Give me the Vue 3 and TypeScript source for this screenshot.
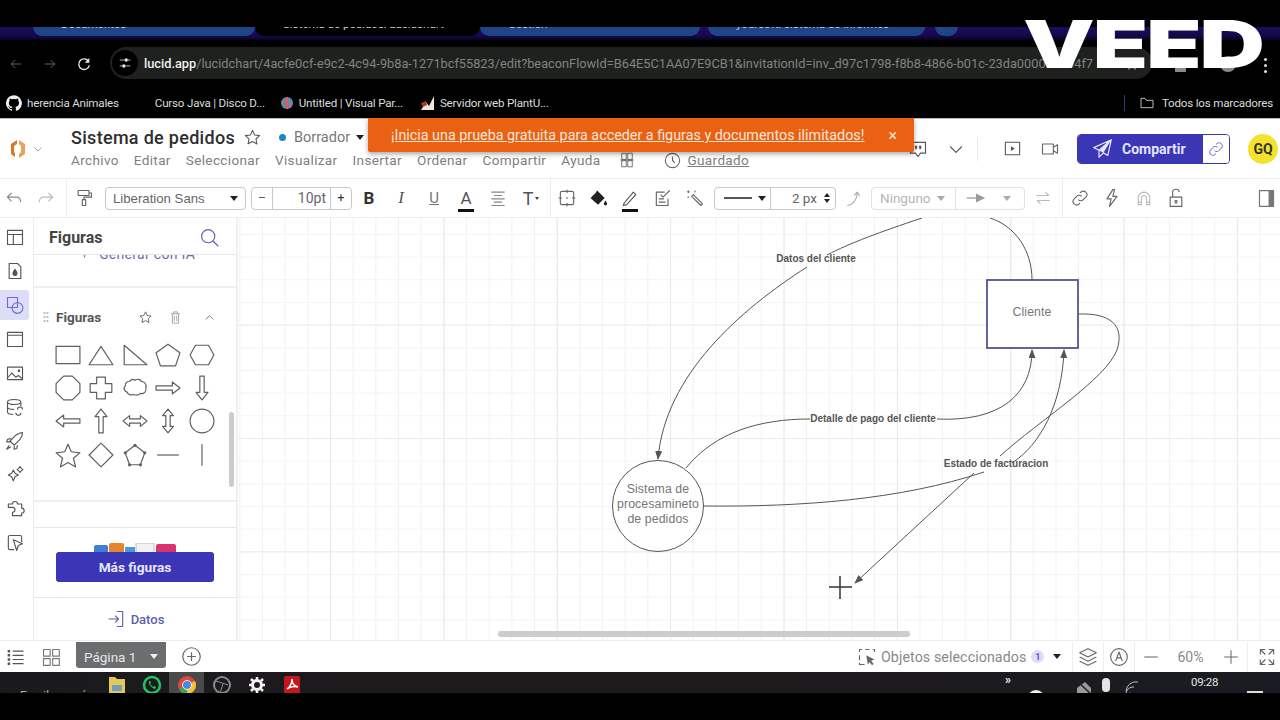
<template>
  <div class="screen">
    <div class="letterbox"></div>

    <div class="tabstrip">
      <div v-for="t in tabs" :key="t.text" class="tab" :class="{ current: t.current }" :style="{ width: t.w + 'px', marginLeft: t.ml + 'px' }">
        <span class="tab-text">{{ t.text }}</span>
      </div>
    </div>

    <div class="chromebar">
      <span class="nav-btn"><Ico n="back" :s="16" c="#6b6b6b" /></span>
      <span class="nav-btn"><Ico n="forward" :s="16" c="#6b6b6b" /></span>
      <span class="nav-btn"><Ico n="reload" :s="16" c="#e8e8e8" :w="2" /></span>
      <div class="omnibox">
        <span class="site-icon"><Ico n="tune" :s="14" c="#e6e6e6" /></span>
        <span class="url"><b>lucid.app</b>/lucidchart/4acfe0cf-e9c2-4c94-9b8a-1271bcf55823/edit?beaconFlowId=B64E5C1AA07E9CB1&amp;invitationId=inv_d97c1798-f8b8-4866-b01c-23da000000004f7</span>
      </div>
      <span class="peek-star"><Ico n="star" :s="16" c="#8a8a8a" /></span>
      <span class="peek-tablet"></span>
      <span class="peek-profile"></span>
      <span class="kebab"></span>
    </div>

    <div class="bookmarks">
      <span class="bm gh"><Ico n="github" :s="16" c="#f0f0f0" />herencia Animales</span>
      <span class="bm java">Curso Java | Disco D...</span>
      <span class="bm vp">
        <svg width="14" height="14" viewBox="0 0 14 14"><circle cx="7" cy="7" r="6" fill="#5b8fa8" /><path d="M7 1v12M2 5l10 5" stroke="#d65b6b" stroke-width="2" /></svg>
        Untitled | Visual Par...
      </span>
      <span class="bm uml">
        <svg width="15" height="16" viewBox="0 0 15 16"><path d="M1 15 6 7l3 4 5-10v14z" fill="#f0e6dc" /><path d="M1 8l5-2 1 4-4 2z" fill="#b5342e" /></svg>
        Servidor web PlantU...
      </span>
      <span class="bm-divider"></span>
      <span class="bm all"><Ico n="folder" :s="16" c="#cfcfcf" />Todos los marcadores</span>
    </div>

    <div class="app">
      <header class="header">
        <div class="brand">
          <svg width="20" height="20" viewBox="0 0 20 20">
            <path d="M9 1 3 5v10l4 3v-4L6 13V7l3-2z" fill="#d9762b" />
            <path d="M11 1l6 4v10l-6 4v-4l2-2V7l-2-2z" fill="#e9a35d" />
          </svg>
          <Ico n="down" :s="12" c="#777" />
        </div>
        <div class="doc">
          <div class="title-row">
            <span class="doc-title">Sistema de pedidos</span>
            <Ico n="star" :s="19" c="#555" />
            <span class="status-dot"></span>
            <span class="status">Borrador</span>
            <span class="caret"></span>
          </div>
          <div class="menu-row">
            <nav class="menu">
              <span v-for="m in menu" :key="m">{{ m }}</span>
            </nav>
            <span class="org"><Ico n="org" :s="18" c="#777" /></span>
            <span class="clock"><Ico n="clock" :s="19" c="#666" /></span>
            <span class="saved">Guardado</span>
          </div>
        </div>
        <div class="actions">
          <span class="act"><Ico n="comment" :s="20" c="#555" /></span>
          <span class="act chev"><Ico n="down" :s="20" c="#555" /></span>
          <span class="act-divider"></span>
          <span class="act play"><Ico n="play" :s="19" c="#555" /></span>
          <span class="act video"><Ico n="video" :s="20" c="#666" /></span>
          <div class="share">
            <button class="share-main"><Ico n="send" :s="21" c="#e4e4fa" />Compartir</button>
            <span class="share-link"><Ico n="link" :s="18" c="#7d80c4" /></span>
          </div>
          <span class="avatar">GQ</span>
        </div>
      </header>

      <div class="toolbar">
        <span class="tb first"><Ico n="undo" :s="20" c="#888" /></span>
        <span class="tb"><Ico n="redo" :s="20" c="#bbb" /></span>
        <span class="tb-divider d1"></span>
        <span class="tb"><Ico n="roller" :s="20" c="#666" /></span>
        <div class="field font-field"><span>Liberation Sans</span><i class="caret"></i></div>
        <div class="field size-field">
          <span class="step left">–</span>
          <span class="size">10pt</span>
          <span class="step right">+</span>
        </div>
        <span class="tb glyph bold">B</span>
        <span class="tb glyph ital">I</span>
        <span class="tb glyph under">U</span>
        <span class="tb glyph mark">A</span>
        <span class="tb"><Ico n="align" :s="20" c="#888" /></span>
        <span class="tb glyph tee">T<i class="tiny"></i></span>
        <span class="tb-divider d2"></span>
        <span class="tb tight"><Ico n="frame" :s="20" c="#666" /></span>
        <span class="tb"><Ico n="bucket" :s="20" c="#222" /></span>
        <span class="tb mark-icon"><Ico n="pen" :s="20" c="#555" /></span>
        <span class="tb wide"><Ico n="notes" :s="20" c="#666" /></span>
        <span class="tb"><Ico n="wand" :s="20" c="#666" /></span>
        <div class="field line-field">
          <span class="line-part"><i class="stroke"></i><i class="caret"></i></span>
          <span class="px-part">2 px<i class="updown"></i></span>
        </div>
        <span class="tb curve-cell"><Ico n="curve" :s="20" c="#aaa" /></span>
        <div class="field end-field">
          <span class="end-part">Ninguno<i class="caret soft"></i></span>
          <span class="end-part second"><Ico n="lineArrow" :s="22" c="#9a9a9a" /><i class="caret soft"></i></span>
        </div>
        <span class="tb swap-cell"><Ico n="swap" :s="20" c="#bbb" /></span>
        <span class="tb-divider d3"></span>
        <span class="tb"><Ico n="link" :s="20" c="#666" /></span>
        <span class="tb"><Ico n="bolt" :s="20" c="#666" /></span>
        <span class="tb"><Ico n="magnet" :s="20" c="#bbb" /></span>
        <span class="tb"><Ico n="lock" :s="20" c="#666" /></span>
        <span class="tb panel-toggle"><Ico n="panel" :s="21" c="#777" /></span>
      </div>

      <div class="workspace">
        <aside class="rail">
          <span v-for="r in railIcons" :key="r" class="rail-item" :class="{ active: r === 'shapes' }">
            <Ico :n="r" :s="20" :c="r === 'shapes' ? '#6a6ec9' : '#555'" />
          </span>
        </aside>

        <section class="panel">
          <div class="panel-head">
            <span>Figuras</span>
            <Ico n="search" :s="21" c="#5c60ad" />
          </div>
          <div class="panel-scroll">
            <div class="ai-row"><Ico n="sparkle" :s="13" c="#6a6ea8" /><span>Generar con IA</span></div>
            <div class="group">
              <div class="group-head">
                <span class="grip"></span>
                <span class="group-name">Figuras</span>
                <span class="gi star-i"><Ico n="star" :s="15" c="#555" /></span>
                <span class="gi trash-i"><Ico n="trash" :s="15" c="#999" /></span>
                <span class="gi up-i"><Ico n="up" :s="15" c="#666" /></span>
              </div>
              <div class="shape-grid">
                <span v-for="s in shapes" :key="s" class="shape"><Ico :n="s" :s="26" c="#5f5f5f" :w="1.1" /></span>
              </div>
            </div>
            <div class="group second">
              <div class="group-head">
                <span class="grip"></span>
                <span class="group-name">Mis figur...</span>
                <span class="gi star-i"><Ico n="star" :s="15" c="#555" /></span>
                <span class="gi trash-i"><Ico n="trash" :s="15" c="#999" /></span>
                <span class="gi up-i"><Ico n="up" :s="15" c="#666" /></span>
              </div>
            </div>
            <div class="scroll-thumb"></div>
          </div>
          <div class="panel-foot">
            <svg class="peek" width="90" height="9" viewBox="0 0 90 9">
              <rect x="1" y="2" width="14" height="10" rx="2" fill="#3f7fd8" />
              <rect x="16" y="0" width="15" height="12" rx="2" fill="#e5852e" />
              <rect x="32" y="4" width="10" height="8" fill="#4a9bd8" />
              <rect x="43" y="0" width="18" height="12" fill="#f2f2f2" stroke="#aaa" stroke-width=".7" />
              <rect x="63" y="1" width="20" height="12" rx="2" fill="#d8336e" />
            </svg>
            <button class="more">Más figuras</button>
          </div>
          <div class="panel-data"><Ico n="import" :s="20" c="#5c60ad" /><span>Datos</span></div>
        </section>

        <main class="canvas">
          <svg class="diagram" viewBox="238 218 1042 422" width="1042" height="422">
            <defs>
              <marker id="head" markerWidth="10" markerHeight="10" refX="8" refY="3.5" orient="auto" markerUnits="userSpaceOnUse">
                <path d="M0 0 9 3.5 0 7z" fill="#555" />
              </marker>
            </defs>
            <g class="wire">
              <path d="M1032 280C1032 250 1015 226 990 218" />
              <path d="M922 218C880 232 850 243 827 255" />
              <path d="M807 267C740 310 665 375 658 459" marker-end="url(#head)" />
              <path d="M686 468C715 432 760 419 810 419" />
              <path d="M937 419C1000 422 1032 395 1032 350" marker-end="url(#head)" />
              <path d="M704 506C800 507 900 500 984 472" />
              <path d="M1079 314C1110 313 1125 325 1117 350 1105 380 1040 420 1000 456" />
              <path d="M1012 463C1040 445 1062 405 1064 350" marker-end="url(#head)" />
              <path d="M974 473 855 583" marker-end="url(#head)" />
            </g>
            <g class="node">
              <rect x="987" y="280" width="91" height="68" />
              <circle class="round" cx="658" cy="506" r="45.500" />
            </g>
            <text class="node-text" x="1032" y="316">Cliente</text>
            <text class="node-text" x="658" y="493">Sistema de</text>
            <text class="node-text" x="658" y="508">procesamineto</text>
            <text class="node-text" x="658" y="523">de pedidos</text>
            <text class="wire-text" x="816" y="262">Datos del cliente</text>
            <text class="wire-text" x="873" y="422">Detalle de pago del cliente</text>
            <text class="wire-text" x="996" y="467">Estado de facturacion</text>
            <path class="cross" d="M840 576v23M829 587h23" />
          </svg>
          <div class="hscroll"></div>
        </main>
      </div>

      <footer class="pagebar">
        <span class="pb list"><Ico n="list" :s="20" c="#555" /></span>
        <span class="pb"><Ico n="pages" :s="20" c="#777" /></span>
        <div class="page-tab">Página 1<i class="caret light"></i></div>
        <span class="pb add"><Ico n="plus-circle" :s="21" c="#666" /></span>
        <div class="status-area">
          <Ico n="select" :s="20" c="#666" />
          <span class="sel-text">Objetos seleccionados</span>
          <span class="badge">1</span>
          <i class="caret"></i>
        </div>
        <span class="pb-cell bordered"><Ico n="layers" :s="20" c="#666" /></span>
        <span class="pb-cell bordered"><Ico n="circleA" :s="20" c="#666" /></span>
        <span class="pb-cell bordered minus"><Ico n="minus" :s="18" c="#666" /></span>
        <span class="zoom-val">60%</span>
        <span class="pb-cell plus"><Ico n="plus" :s="18" c="#666" /></span>
        <span class="pb-cell full"><Ico n="expand" :s="20" c="#666" /></span>
      </footer>
    </div>

    <div class="taskbar">
      <span class="search-peek">Escribe aquí</span>
      <span class="task folder">
        <svg width="20" height="20" viewBox="0 0 20 20"><path d="M2 2h6l2 2h8v16H2z" fill="#e9c65a" /><rect x="5" y="10" width="10" height="6" fill="#6fa0b8" /></svg>
      </span>
      <span class="task">
        <svg width="20" height="20" viewBox="0 0 20 20"><circle cx="10" cy="10" r="8" fill="none" stroke="#25c35f" stroke-width="2.500" /><path d="M7 6c-1 2 2 7 6 8l1-2-2-1-1 1-3-3 1-1-1-2z" fill="#25c35f" /></svg>
      </span>
      <span class="task on">
        <svg width="20" height="20" viewBox="0 0 20 20"><circle cx="10" cy="10" r="9" fill="#e0483c" /><path d="M10 10 2 14a9 9 0 0 0 8 5z" fill="#3aa655" /><path d="M10 10v9a9 9 0 0 0 8-13z" fill="#f4c430" /><circle cx="10" cy="10" r="4.500" fill="#4a86e8" stroke="#eee" /></svg>
      </span>
      <span class="task">
        <svg width="20" height="20" viewBox="0 0 20 20"><circle cx="10" cy="10" r="8" fill="none" stroke="#8a8a8a" stroke-width="2" /><path d="M4 6l12 4M8 18l3-9" stroke="#8a8a8a" /></svg>
      </span>
      <span class="task">
        <svg width="20" height="20" viewBox="0 0 20 20"><circle cx="10" cy="10" r="4.500" fill="none" stroke="#f2f2f2" stroke-width="3" /><path d="M10 2v3M10 15v3M2 10h3M15 10h3M4 4l2 2M14 14l2 2M16 4l-2 2M6 14l-2 2" stroke="#f2f2f2" stroke-width="2.500" /></svg>
      </span>
      <span class="task">
        <svg width="18" height="20" viewBox="0 0 18 20"><rect x="1" y="1" width="16" height="18" rx="2" fill="#c4161c" /><path d="M4 14c3-2 5-6 5-10 0 4 2 7 6 8-4-1-8 0-11 2z" fill="none" stroke="#fff" stroke-width="1.500" /></svg>
      </span>
      <span class="tray">
        <span class="tray-more">»</span>
        <span class="tray-bubble"></span>
        <svg class="tray-net" width="18" height="18" viewBox="0 0 18 18"><path d="M2 10 10 4l6 6v8H2z" fill="#9b9b9b" /><path d="M2 3l14 13" stroke="#222" stroke-width="1.500" /></svg>
        <svg class="tray-mic" width="12" height="20" viewBox="0 0 12 20"><rect x="2" y="1" width="8" height="14" rx="4" fill="#e4e4e4" /><path d="M1 17h10" stroke="#e4e4e4" stroke-width="2" /></svg>
        <svg class="tray-wifi" width="16" height="18" viewBox="0 0 16 18" fill="none" stroke="#bdbdbd"><path d="M2 12a10 10 0 0 1 12-9M2 15a7 7 0 0 1 8-7M3 18a4 4 0 0 1 4-4" /></svg>
        <span class="time">09:28</span>
        <span class="date-peek"></span>
      </span>
    </div>

    <div class="letterbox bottom"></div>

    <div class="banner">
      <a class="banner-link">¡Inicia una prueba gratuita para acceder a figuras y documentos ilimitados!</a>
      <span class="banner-x">×</span>
    </div>

    <div class="watermark">VEED</div>
  </div>
</template>

<script setup lang="ts">
import { h } from 'vue'

const tabs = [
  { text: 'Documentos', w: 222, ml: 33, current: false },
  { text: 'Sistema de pedidos: Lucidchart', w: 225, ml: 0, current: true },
  { text: 'Gestión', w: 220, ml: 0, current: false },
  { text: 'yoursoft: sistema de informes', w: 217, ml: 8, current: false },
  { text: '+', w: 23, ml: 10, current: false },
]

const menu = ['Archivo', 'Editar', 'Seleccionar', 'Visualizar', 'Insertar', 'Ordenar', 'Compartir', 'Ayuda']

const railIcons = ['layout', 'dropDoc', 'shapes', 'window', 'image', 'database', 'rocket', 'sparkles', 'puzzle', 'cursorBox']

const shapes = [
  'sRect', 'sTriangle', 'sRight', 'sPentagon', 'sHexagon',
  'sOctagon', 'sCross', 'sCloud', 'sArrowR', 'sArrowD',
  'sArrowL', 'sArrowU', 'sArrowH', 'sArrowV', 'sCircle',
  'sStar', 'sDiamond', 'sPoly', 'sHLine', 'sVLine',
]

// a path starting with F is filled, all the others are stroked
const icons: Record<string, string[]> = {
  back: ['M20 12H5M11 6l-6 6 6 6'],
  forward: ['M4 12h15M13 6l6 6-6 6'],
  reload: ['M19 8a8 8 0 1 0 1 6', 'FM20 3v7h-7z'],
  tune: ['M3 7h8M17 7h4M3 17h4M13 17h8', 'FM14 4a3 3 0 1 0 0 6 3 3 0 0 0 0-6zM10 14a3 3 0 1 0 0 6 3 3 0 0 0 0-6z'],
  github: ['FM12 .3a12 12 0 0 0-3.800 23.400c.6.1.8-.3.8-.6v-2c-3.300.7-4-1.600-4-1.600-.6-1.400-1.400-1.800-1.400-1.800-1-.7.1-.7.1-.7 1.200.1 1.800 1.200 1.800 1.200 1 1.800 2.800 1.300 3.500 1 .1-.8.4-1.300.8-1.600-2.700-.3-5.500-1.300-5.500-6 0-1.200.5-2.300 1.200-3.100-.1-.3-.5-1.500.1-3.200 0 0 1-.3 3.300 1.200a11.500 11.500 0 0 1 6 0c2.300-1.500 3.300-1.200 3.300-1.200.6 1.700.2 2.900.1 3.200.8.8 1.200 1.900 1.200 3.100 0 4.600-2.800 5.700-5.500 6 .4.4.8 1.100.8 2.200v3.300c0 .3.2.7.8.6A12 12 0 0 0 12 .3z'],
  folder: ['M3 5h6l2 3h10v11H3z'],
  down: ['M5 9l7 7 7-7'],
  up: ['M6 15l6-6 6 6'],
  star: ['M12 3l2.700 5.800 6.300.8-4.600 4.300 1.200 6.300L12 17l-5.600 3 1.200-6.300L3 9.600l6.300-.8z'],
  org: ['M5 3h6v8H5zM13 3h6v8h-6zM5 13h6v8H5zM13 13h6v8h-6zM3 12h18'],
  clock: ['M12 3a9 9 0 1 0 0 18 9 9 0 0 0 0-18zM12 7v5l3 3'],
  comment: ['M3 4h18v13h-6l-3 4-3-4H3z', 'FM8 8h3v3l-2 2zM13 8h3v3l-2 2z'],
  play: ['M3 4h18v16H3z', 'FM10 9l5 3-5 3z'],
  video: ['M3 6h13v12H3zM16 10l5-3v10l-5-3z'],
  send: ['M22 2 2 11l6 3zM22 2 8 14v8l5-5 5 3z', 'FM22 2 8 14l5 3z'],
  link: ['M10 14a4 4 0 0 0 6 0l3-3a4 4 0 0 0-6-6l-1 1M14 10a4 4 0 0 0-6 0l-3 3a4 4 0 0 0 6 6l1-1'],
  undo: ['M9 6l-5 5 5 5M4 11h11c3 0 5 2 5 6'],
  redo: ['M15 6l5 5-5 5M20 11H9c-3 0-5 2-5 6'],
  roller: ['M5 3h13v6H5zM18 6h3v5h-9v3M10 14h4v7h-4z'],
  align: ['M4 5h16M7 9h10M4 13h16M7 17h10M4 21h16'],
  frame: ['M6 4h12a2 2 0 0 1 2 2v12a2 2 0 0 1-2 2H6a2 2 0 0 1-2-2V6a2 2 0 0 1 2-2zM12 2v4M12 18v4M2 12h4M18 12h4M12 11v2M11 12h2'],
  bucket: ['FM11 3l9 9-8 8-9-8 6-6z', 'FM21 15c-1 2-2 3-2 4a2 2 0 0 0 4 0c0-1-1-2-2-4z'],
  pen: ['M5 18 16 5l3 3L8 20l-4 1z'],
  notes: ['M14 5H4v16h14V13M7 13h6M7 17h8', 'M9 8l3 3 8-8'],
  wand: ['M10 8l11 11-2 2L8 10zM4 3v3M2.500 4.500h3M12 3v2M3 11h2'],
  curve: ['M4 21c7-1 11-6 12-15M12 9l4-4 3 5'],
  lineArrow: ['M2 12h10', 'FM12 7l10 5-10 5z'],
  swap: ['M4 9h15M15 5l4 4M20 15H5M9 19l-4-4'],
  bolt: ['M13 2 6 13h5l-2 9 9-12h-5l2-8z'],
  magnet: ['M5 20v-8a7 7 0 0 1 14 0v8h-4v-8a3 3 0 0 0-6 0v8zM5 17h4M15 17h4'],
  lock: ['M5 11h14v11H5zM8 11V6a4 4 0 0 1 8-1M11 15h2v3h-2z'],
  panel: ['M4 3h16v18H4zM15 3v18', 'FM15 3h5v18h-5z'],
  search: ['M10.500 3a7.500 7.500 0 1 0 0 15 7.500 7.500 0 0 0 0-15zM16 16l6 6'],
  trash: ['M5 6h14M9 6V3h6v3M7 6v15h10V6M10 9v9M14 9v9'],
  sparkle: ['M12 3l2 7 7 2-7 2-2 7-2-7-7-2 7-2z'],
  import: ['M13 3h7v18h-7M3 12h12M11 8l4 4-4 4'],
  layout: ['M3 4h18v17H3zM3 9h18M10 9v12'],
  dropDoc: ['M5 3h10l4 4v14H5z', 'FM12 9c-2 3-3 4-3 6a3 3 0 0 0 6 0c0-2-1-3-3-6z'],
  shapes: ['M3 3h12v12H3zM15 9a6.500 6.500 0 1 0 0 13 6.500 6.500 0 0 0 0-13z'],
  window: ['M3 4h18v17H3zM3 7.500h18'],
  image: ['M3 5h18v15H3zM3 18l5-6 5 5 3-2 5 4M16 8.500h1.500v1.500H16z'],
  database: ['M3 6c0-4 16-4 16 0s-16 4-16 0v12c0 2 3 3 7 3M3 12c0 2 3 3 8 3M19 6v5', 'M15 15a3 3 0 0 1 6 0M13 19a3 3 0 0 0 6 0'],
  rocket: ['M13 5c3-2 7-3 8-3 0 1-1 5-3 8l-7 7-5-5zM7 9l-4 1-1 3h4M15 17l-1 4-3 1v-4M5 17l-3 5 5-3'],
  sparkles: ['M10 6l2 4 4 2-4 2-2 5-2-5-4-2 4-2z', 'M18 2l1.500 2 2 1.500-2 1.500L18 9l-1.500-2-2-1.500 2-1.500z'],
  puzzle: ['M9 6a3 3 0 1 1 6 0h5v5a3 3 0 1 1 0 6v3H9v-4a3 3 0 1 0 0-6H4V6z'],
  cursorBox: ['M11 20H6a2 2 0 0 1-2-2V5a2 2 0 0 1 2-2h12a2 2 0 0 1 2 2v6', 'M10 8l11 5-5 2-2 6z'],
  list: ['M8 5h13M8 10h13M8 15h13M8 20h13', 'FM2 3.500h3v3H2zM2 8.500h3v3H2zM2 13.500h3v3H2zM2 18.500h3v3H2z'],
  pages: ['M3 3h8v8H3zM14 3h8v8h-8zM3 14h8v8H3zM14 14h8v8h-8z'],
  'plus-circle': ['M12 2a10 10 0 1 0 0 20 10 10 0 0 0 0-20zM12 7v10M7 12h10'],
  select: ['M3 6V3h3M10 3h5M19 3h2v3M3 10v6M3 19v2h6', 'FM11 10l10 5-4 1.500 3 4-2 1.500-3-4-2 3z'],
  layers: ['M12 2 2 7l10 5 10-5zM2 12l10 5 10-5M2 17l10 5 10-5'],
  circleA: ['M12 2a10 10 0 1 0 0 20 10 10 0 0 0 0-20zM8 17l4-11 4 11M9.500 13h5'],
  minus: ['M3 12h18'],
  plus: ['M12 3v18M3 12h18'],
  expand: ['M4 9V3h6M4 3l6 6M20 9V3h-6M20 3l-6 6M4 15v6h6M4 21l6-6M20 15v6h-6M20 21l-6-6'],
  sRect: ['M1 4h22v16H1z'],
  sTriangle: ['M12 4l11 17H1z'],
  sRight: ['M2 3l21 18H2z'],
  sPentagon: ['M12 2l11 8-4 12H5L1 10z'],
  sHexagon: ['M6 3h12l5 9-5 9H6l-5-9z'],
  sOctagon: ['M8 1h8l7 7v8l-7 7H8l-7-7V8z'],
  sCross: ['M8 2h8v6h6v8h-6v6H8v-6H2V8h6z'],
  sCloud: ['M7 6c2-3 4-2 5-1 2-2 5-1 6 1 3 0 5 3 4 6 1 3-2 6-5 5-2 2-4 2-6 1-3 1-6 0-6-2-3-1-4-4-2-6 0-3 2-4 4-4z'],
  sArrowR: ['M1 10h15V6.500l7 5.500-7 5.500V14H1z'],
  sArrowD: ['M10 1v15H6.500l5.500 7 5.500-7H14V1z'],
  sArrowL: ['M23 10H8V6.500L1 12l7 5.500V14h15z'],
  sArrowU: ['M10 23V8H6.500L12 1l5.500 7H14v15z'],
  sArrowH: ['M1 12l6-5v3h10V7l6 5-6 5v-3H7v3z'],
  sArrowV: ['M12 1l5 6h-3v10h3l-5 6-5-6h3V7H7z'],
  sCircle: ['M12 1a11 11 0 1 0 0 22 11 11 0 0 0 0-22z'],
  sStar: ['M12 2l3 7 8 1-6 5 2 8-7-4-7 4 2-8-6-5 8-1z'],
  sDiamond: ['M12 1l11 11-11 11L1 12z'],
  sPoly: ['M12 3l9 7-4 11H7L3 10z', 'FM12 1.500a1.500 1.500 0 1 0 0 3 1.500 1.500 0 0 0 0-3zM21 8.500a1.500 1.500 0 1 0 0 3 1.500 1.500 0 0 0 0-3zM3 8.500a1.500 1.500 0 1 0 0 3 1.500 1.500 0 0 0 0-3zM7 19.500a1.500 1.500 0 1 0 0 3 1.500 1.500 0 0 0 0-3zM17 19.500a1.500 1.500 0 1 0 0 3 1.500 1.500 0 0 0 0-3z'],
  sHLine: ['M2 12h20'],
  sVLine: ['M12 2v20'],
}

const Ico = (p: { n: string; s?: number; c?: string; w?: number }) =>
  h(
    'svg',
    {
      viewBox: '0 0 24 24',
      width: p.s ?? 20,
      height: p.s ?? 20,
      fill: 'none',
      stroke: p.c ?? '#555',
      'stroke-width': p.w ?? 1.35,
      'stroke-linejoin': 'round',
      style: 'display:block;flex:none',
    },
    icons[p.n].map((d) =>
      d.startsWith('F') ? h('path', { d: d.slice(1), fill: p.c ?? '#555', stroke: 'none' }) : h('path', { d }),
    ),
  )
</script>

<style>
html,
body {
  margin: 0;
  background: #000;
}
</style>

<style scoped>
.screen {
  position: relative;
  width: 1280px;
  height: 720px;
  overflow: hidden;
  background: #000;
  display: flex;
  flex-direction: column;
  font-family: Roboto, "Liberation Sans", sans-serif;
}
.letterbox {
  height: 27px;
  flex: none;
  background: #000;
}
.tabstrip {
  height: 13px;
  flex: none;
  display: flex;
  background: linear-gradient(#1c0b5c, #16084a 70%, #06031c);
  overflow: hidden;
}
.tab {
  height: 9px;
  flex: none;
  background: #1f4488;
  border-radius: 0 0 9px 9px;
  overflow: hidden;
}
.tab.current {
  background: #000;
}
.tab-text {
  display: block;
  margin: -10px 0 0 28px;
  font-size: 11.500px;
  line-height: 14px;
  color: #c9d2e6;
  white-space: nowrap;
}
.chromebar {
  height: 48px;
  flex: none;
  display: flex;
  align-items: center;
  background: #000;
  position: relative;
}
.nav-btn {
  width: 34px;
  display: flex;
  justify-content: center;
}
.nav-btn:first-child {
  margin-left: -1px;
}
.omnibox {
  width: 1042px;
  height: 32px;
  margin-left: 9px;
  margin-top: -2px;
  border-radius: 16px;
  background: #1e211e;
  display: flex;
  align-items: center;
  overflow: hidden;
}
.site-icon {
  width: 26px;
  height: 26px;
  margin-left: 2px;
  border-radius: 50%;
  background: #000;
  display: flex;
  align-items: center;
  justify-content: center;
}
.url {
  margin-left: 6px;
  font-size: 12.800px;
  letter-spacing: -0.02px;
  color: #7f8580;
  white-space: nowrap;
}
.url b {
  color: #f0f0f0;
  font-weight: 500;
}
.peek-star {
  position: absolute;
  left: 1124px;
  top: 16px;
}
.peek-tablet {
  position: absolute;
  left: 1175px;
  top: 20px;
  width: 11px;
  height: 12px;
  background: #8a8a8a;
}
.peek-profile {
  position: absolute;
  left: 1220px;
  top: 16px;
  width: 16px;
  height: 16px;
  border-radius: 50%;
  background: #8a8a8a;
}
.kebab {
  position: absolute;
  left: 1264px;
  top: 24px;
  width: 3px;
  height: 3px;
  border-radius: 50%;
  background: #ddd;
  box-shadow: 0 -6px #ddd, 0 6px #ddd;
}
.bookmarks {
  height: 30px;
  flex: none;
  display: flex;
  align-items: center;
  background: #000;
  font-size: 11.600px;
  color: #dcdcdc;
  white-space: nowrap;
}
.bm {
  display: flex;
  align-items: center;
  gap: 5px;
  letter-spacing: -0.2px;
}
.gh {
  margin-left: 6px;
}
.java {
  margin-left: 36px;
}
.vp {
  margin-left: 15px;
}
.uml {
  margin-left: 17px;
}
.bm-divider {
  width: 1px;
  height: 16px;
  margin-left: auto;
  background: #2a3c78;
}
.all {
  margin: 0 7px 0 14px;
  gap: 7px;
}
.app {
  height: 554px;
  flex: none;
  display: flex;
  flex-direction: column;
  background: #fff;
  border-top: 1px solid #bbb;
  box-sizing: border-box;
  color: #666;
}
.header {
  height: 60px;
  flex: none;
  display: flex;
  border-bottom: 1px solid #eee;
  box-sizing: border-box;
}
.brand {
  width: 71px;
  flex: none;
  padding-left: 8px;
  box-sizing: border-box;
  display: flex;
  align-items: center;
  gap: 4px;
}
.doc {
  flex: none;
}
.title-row {
  height: 24px;
  margin-top: 6px;
  display: flex;
  align-items: center;
}
.doc-title {
  font-size: 18px;
  font-weight: 500;
  color: #2e2e30;
  letter-spacing: 0.3px;
  margin-right: 8px;
}
.status-dot {
  width: 7px;
  height: 7px;
  margin-left: 17px;
  border-radius: 50%;
  background: #1a86c7;
}
.status {
  margin-left: 8px;
  font-size: 14.500px;
  color: #777;
}
.caret {
  display: inline-block;
  width: 0;
  height: 0;
  border-left: 4px solid transparent;
  border-right: 4px solid transparent;
  border-top: 5px solid #222;
}
.title-row .caret {
  margin-left: 6px;
}
.menu-row {
  height: 20px;
  margin-top: 1px;
  display: flex;
  align-items: center;
  font-size: 13.550px;
  color: #808080;
  letter-spacing: 0.35px;
}
.menu {
  display: flex;
  gap: 15px;
}
.org {
  margin-left: 18px;
}
.clock {
  margin-left: 27px;
}
.saved {
  margin-left: 5px;
  text-decoration: underline;
}
.actions {
  margin-left: auto;
  padding-right: 2px;
  display: flex;
  align-items: center;
}
.act {
  width: 32px;
  display: flex;
  justify-content: center;
}
.chev {
  margin-left: 6px;
}
.act-divider {
  width: 1px;
  height: 24px;
  margin: 0 18px 0 5px;
  background: #e8e8e8;
}
.video {
  margin-left: 6px;
}
.share {
  margin-left: 11px;
  display: flex;
  height: 30px;
  border: 1px solid #3a36b5;
  border-radius: 4px;
  overflow: hidden;
  box-sizing: border-box;
}
.share-main {
  width: 125px;
  border: 0;
  padding: 0 0 0 14px;
  background: #3a36b5;
  color: #e4e4fa;
  font: 700 14px Roboto, sans-serif;
  display: flex;
  align-items: center;
  gap: 9px;
}
.share-link {
  width: 26px;
  background: #fff;
  display: flex;
  align-items: center;
  justify-content: center;
}
.avatar {
  width: 30px;
  height: 30px;
  margin-left: 18px;
  border-radius: 50%;
  background: #f5e22e;
  color: #333;
  font-size: 14px;
  font-weight: 700;
  display: flex;
  align-items: center;
  justify-content: center;
}
.toolbar {
  height: 39px;
  flex: none;
  display: flex;
  align-items: center;
  border-bottom: 1px solid #eee;
  box-sizing: border-box;
}
.tb {
  width: 32px;
  height: 30px;
  flex: none;
  display: flex;
  align-items: center;
  justify-content: center;
  position: relative;
}
.tb.first {
  margin-left: -2px;
}
.tb.tight {
  width: 30px;
}
.tb.wide {
  width: 33px;
}
.tb-divider {
  width: 1px;
  height: 38px;
  flex: none;
  background: #eee;
}
.d1 {
  margin-left: 4px;
  margin-right: 1px;
}
.d2 {
  margin: 0 1px 0 3px;
}
.d3 {
  margin: 0 1px 0 3px;
}
.field {
  height: 23px;
  flex: none;
  border: 1px solid #c8c8c8;
  border-radius: 4px;
  box-sizing: border-box;
  display: flex;
  align-items: center;
  font-size: 13px;
  color: #666;
}
.font-field {
  width: 141px;
  margin-left: 5px;
  padding: 0 7px;
  justify-content: space-between;
  font-family: "Liberation Sans", sans-serif;
  font-size: 13.200px;
}
.size-field {
  width: 101px;
  margin-left: 5px;
  margin-right: 1px;
}
.step {
  width: 20px;
  text-align: center;
  font-size: 12px;
  color: #555;
}
.step.right {
  border-left: 1px solid #c8c8c8;
  color: #333;
  line-height: 21px;
}
.step.left {
  border-right: 1px solid #c8c8c8;
  line-height: 21px;
}
.size {
  flex: 1;
  text-align: right;
  padding-right: 4px;
  font-size: 14px;
}
.glyph {
  font-size: 17px;
  color: #555;
}
.bold {
  font-weight: 700;
  color: #333;
}
.ital {
  font-style: italic;
  font-family: "Liberation Serif", serif;
}
.under {
  margin-left: 1px;
  text-decoration: underline;
  font-size: 15px;
  color: #777;
}
.mark::after,
.mark-icon::after {
  content: "";
  position: absolute;
  left: 8px;
  bottom: 1px;
  width: 16px;
  height: 3px;
  background: #111;
}
.tee {
  margin-left: 1px;
  font-size: 18px;
}
.tiny {
  width: 0;
  height: 0;
  margin-left: 2px;
  border-left: 2.500px solid transparent;
  border-right: 2.500px solid transparent;
  border-top: 3px solid #444;
}
.line-field {
  width: 122px;
  margin-left: 3px;
}
.line-part {
  width: 56px;
  height: 100%;
  border-right: 1px solid #c8c8c8;
  box-sizing: border-box;
  display: flex;
  align-items: center;
  padding-left: 9px;
  gap: 6px;
}
.stroke {
  width: 28px;
  height: 1.500px;
  background: #555;
}
.px-part {
  flex: 1;
  display: flex;
  align-items: center;
  justify-content: flex-end;
  gap: 7px;
  padding-right: 5px;
  font-size: 13.500px;
}
.updown {
  width: 0;
  height: 0;
  position: relative;
  border-left: 3px solid transparent;
  border-right: 3px solid transparent;
  border-bottom: 4px solid #222;
  margin-bottom: 6px;
}
.updown::after {
  content: "";
  position: absolute;
  left: -3px;
  top: 6px;
  border-left: 3px solid transparent;
  border-right: 3px solid transparent;
  border-top: 4px solid #222;
}
.curve-cell {
  margin-left: 2px;
}
.end-field {
  width: 154px;
  margin-left: 1px;
  border-color: #e2e2e2;
  color: #b5b5b5;
}
.end-part {
  width: 85px;
  height: 100%;
  padding-left: 8px;
  box-sizing: border-box;
  display: flex;
  align-items: center;
  gap: 6px;
  font-size: 13.500px;
  border-right: 1px solid #e2e2e2;
}
.end-part.second {
  width: 68px;
  border-right: 0;
  gap: 16px;
  padding-left: 9px;
}
.caret.soft {
  border-top-color: #aaa;
}
.swap-cell {
  margin-left: 2px;
}
.panel-toggle {
  margin-left: auto;
  margin-right: -2px;
}
.workspace {
  flex: 1;
  min-height: 0;
  display: flex;
}
.rail {
  width: 34px;
  flex: none;
  padding-top: 2px;
  box-sizing: border-box;
  border-right: 1px solid #eee;
}
.rail-item {
  width: 29px;
  height: 34px;
  display: flex;
  align-items: center;
  justify-content: center;
}
.rail-item.active {
  height: 30px;
  margin: 2px 0;
  background: #dddcf9;
  border-radius: 0 3px 3px 0;
}
.panel {
  width: 204px;
  flex: none;
  display: flex;
  flex-direction: column;
  border-right: 2px solid #f0f0f0;
  box-sizing: border-box;
}
.panel-head {
  height: 37px;
  flex: none;
  display: flex;
  align-items: center;
  justify-content: space-between;
  padding: 2px 16px 0 15px;
  box-sizing: border-box;
  font-size: 16px;
  font-weight: 700;
  color: #444;
  border-bottom: 1px solid #e6e6e6;
}
.panel-scroll {
  height: 273px;
  flex: none;
  position: relative;
  overflow: hidden;
  border-bottom: 1px solid #e6e6e6;
  box-sizing: border-box;
}
.ai-row {
  box-sizing: border-box;
  display: flex;
  gap: 8px;
  padding-left: 44px;
  margin-top: -9px;
  height: 42px;
  font-size: 14px;
  letter-spacing: 0.3px;
  line-height: 16px;
  color: #6a6ea8;
  border-bottom: 2px solid #eee;
}
.group {
  height: 200px;
  border-bottom: 2px solid #eee;
  box-sizing: border-box;
}
.group.second {
  height: 60px;
  border-bottom: 0;
}
.group.second .group-head {
  margin-top: 19px;
}
.group-head {
  height: 30px;
  margin-top: 14px;
  display: flex;
  align-items: center;
  font-size: 13.500px;
  font-weight: 700;
  color: #555;
}
.grip {
  width: 6px;
  height: 12px;
  margin-left: 9px;
  background-image: radial-gradient(circle, #bbb 1px, transparent 1.200px);
  background-size: 3px 4px;
}
.group-name {
  width: 81px;
  margin-left: 7px;
  white-space: nowrap;
}
.gi {
  width: 30px;
  display: flex;
  justify-content: center;
}
.star-i {
  margin-left: -7px;
}
.trash-i {
  margin-left: 0;
}
.up-i {
  margin-left: 4px;
}
.shape-grid {
  margin: 6px 0 0 17px;
  width: 168px;
  display: grid;
  grid-template-columns: repeat(5, 33.500px);
  grid-auto-rows: 33.400px;
}
.shape {
  display: flex;
  align-items: center;
  justify-content: center;
}
.scroll-thumb {
  position: absolute;
  left: 195px;
  top: 157px;
  width: 5px;
  height: 75px;
  border-radius: 3px;
  background: #ccc;
}
.panel-foot {
  height: 70px;
  flex: none;
  display: flex;
  flex-direction: column;
  align-items: center;
  padding-top: 15px;
  box-sizing: border-box;
  border-bottom: 1px solid #e6e6e6;
}
.peek {
  display: block;
  margin-left: 6px;
}
.more {
  width: 158px;
  height: 30px;
  flex: none;
  border: 0;
  border-radius: 3px;
  background: #3a36b5;
  color: #e6e6fb;
  font: 700 13.700px Roboto, sans-serif;
}
.panel-data {
  flex: 1;
  display: flex;
  align-items: center;
  justify-content: center;
  gap: 5px;
  font-size: 13px;
  font-weight: 500;
  color: #5c60ad;
}
.canvas {
  flex: 1;
  position: relative;
  overflow: hidden;
  background-color: #fff;
  background-image:
    linear-gradient(to right, #e9e9e6 1px, transparent 1px),
    linear-gradient(to bottom, #ecece9 1px, transparent 1px),
    linear-gradient(to right, #f1f1ee 1px, transparent 1px),
    linear-gradient(to bottom, #f3f3f0 1px, transparent 1px);
  background-size: 113.400px 113.400px, 113.400px 113.400px, 22.680px 22.680px, 22.680px 22.680px;
  background-position: 92px 0, 0 106.700px, 1.300px 0, 0 15.900px;
}
.diagram {
  position: absolute;
  inset: 0;
  display: block;
}
.wire path {
  fill: none;
  stroke: #555;
  stroke-width: 1;
}
.node rect {
  fill: #fff;
  stroke: #525590;
  stroke-width: 1.800;
}
.node .round {
  fill: #fff;
  stroke: #555;
  stroke-width: 1;
}
.node-text {
  font: 12.300px "Liberation Sans", sans-serif;
  fill: #777;
  text-anchor: middle;
  letter-spacing: 0.1px;
}
.wire-text {
  font: 700 10px "Liberation Sans", sans-serif;
  fill: #555;
  text-anchor: middle;
}
.cross {
  fill: none;
  stroke: #333;
  stroke-width: 1.500;
}
.hscroll {
  position: absolute;
  left: 260px;
  top: 413px;
  width: 412px;
  height: 6px;
  border-radius: 3px;
  background: #ccc;
}
.pagebar {
  height: 32px;
  flex: none;
  display: flex;
  align-items: center;
  border-top: 1px solid #eee;
  box-sizing: border-box;
  background: #fff;
}
.pagebar > * {
  flex: none;
}
.pb {
  width: 34px;
  display: flex;
  justify-content: center;
}
.pb.list {
  margin-right: 1px;
  margin-left: -1px;
}
.page-tab {
  width: 90px;
  height: 26px;
  margin-left: 8px;
  margin-top: -3px;
  padding: 3px 8px 0;
  box-sizing: border-box;
  background: #6b6e6e;
  border-radius: 0 0 3px 3px;
  color: #e6e6e6;
  font-size: 13.500px;
  display: flex;
  align-items: center;
  justify-content: space-between;
}
.caret.light {
  border-top-color: #f0f0f0;
}
.add {
  margin-left: 8px;
}
.status-area {
  margin-left: 649px;
  display: flex;
  align-items: center;
  width: 215px;
  height: 100%;
  font-size: 14.200px;
  color: #888;
  letter-spacing: 0.1px;
}
.sel-text {
  margin-left: 4px;
}
.badge {
  width: 13px;
  height: 13px;
  margin: 0 9px 0 5px;
  border-radius: 50%;
  background: #dcdcf8;
  color: #5c60ad;
  font-size: 9px;
  font-weight: 700;
  display: flex;
  align-items: center;
  justify-content: center;
}
.pb-cell {
  width: 31px;
  height: 30px;
  display: flex;
  align-items: center;
  justify-content: center;
  box-sizing: border-box;
}
.bordered {
  border-left: 1px solid #eee;
}
.zoom-val {
  width: 49px;
  text-align: center;
  font-size: 14px;
  color: #888;
}
.minus {
  width: 32px;
}
.plus {
  width: 32px;
}
.full {
  width: 33px;
  padding-left: 5px;
  border-left: 1px solid #eee;
}
.taskbar {
  height: 21px;
  flex: none;
  position: relative;
  display: flex;
  align-items: flex-start;
  padding-left: 99px;
  box-sizing: border-box;
  overflow: hidden;
  background: linear-gradient(to right, #1a1a1c, #1f1a1c 55%, #191c22);
}
.search-peek {
  position: absolute;
  left: 20px;
  top: 17px;
  font-size: 12px;
  color: #aaa;
}
.task {
  width: 35px;
  height: 21px;
  padding-top: 3px;
  box-sizing: border-box;
  display: flex;
  justify-content: center;
}
.task.on {
  background: #4a4a4a;
}
.tray {
  position: absolute;
  inset: 0;
  pointer-events: none;
}
.tray > * {
  position: absolute;
}
.tray-more {
  left: 1005px;
  top: 2px;
  font-size: 12px;
  font-weight: 700;
  line-height: 12px;
  color: #eee;
}
.tray-bubble {
  left: 1027px;
  top: 18px;
  width: 18px;
  height: 18px;
  border-radius: 50%;
  background: #eee;
}
.tray-net {
  left: 1075px;
  top: 6px;
}
.tray-mic {
  left: 1100px;
  top: 5px;
}
.tray-wifi {
  left: 1124px;
  top: 7px;
}
.time {
  left: 1191px;
  top: 3px;
  font-size: 11.500px;
  color: #e4e4e4;
  letter-spacing: -0.3px;
}
.date-peek {
  left: 1247px;
  top: 19px;
  width: 16px;
  height: 2px;
  background: #ddd;
}
.letterbox.bottom {
  flex: 1;
}
.banner {
  position: absolute;
  left: 368px;
  top: 118px;
  width: 546px;
  height: 34px;
  background: #ea6113;
  border-radius: 0 0 2px 2px;
  box-shadow: 0 2px 5px rgba(0, 0, 0, 0.35);
  display: flex;
  align-items: center;
  color: #f8e6d8;
  font-size: 14.330px;
}
.banner-link {
  margin-left: 23px;
  text-decoration: underline;
}
.banner-x {
  margin-left: auto;
  margin-right: 17px;
  font-size: 16px;
}
.watermark {
  position: absolute;
  left: 1023px;
  top: 8px;
  font: 900 66px/72px Inter, "Liberation Sans", sans-serif;
  letter-spacing: -1.500px;
  color: #fff;
  transform: scaleX(1.37);
  transform-origin: left center;
}
</style>
